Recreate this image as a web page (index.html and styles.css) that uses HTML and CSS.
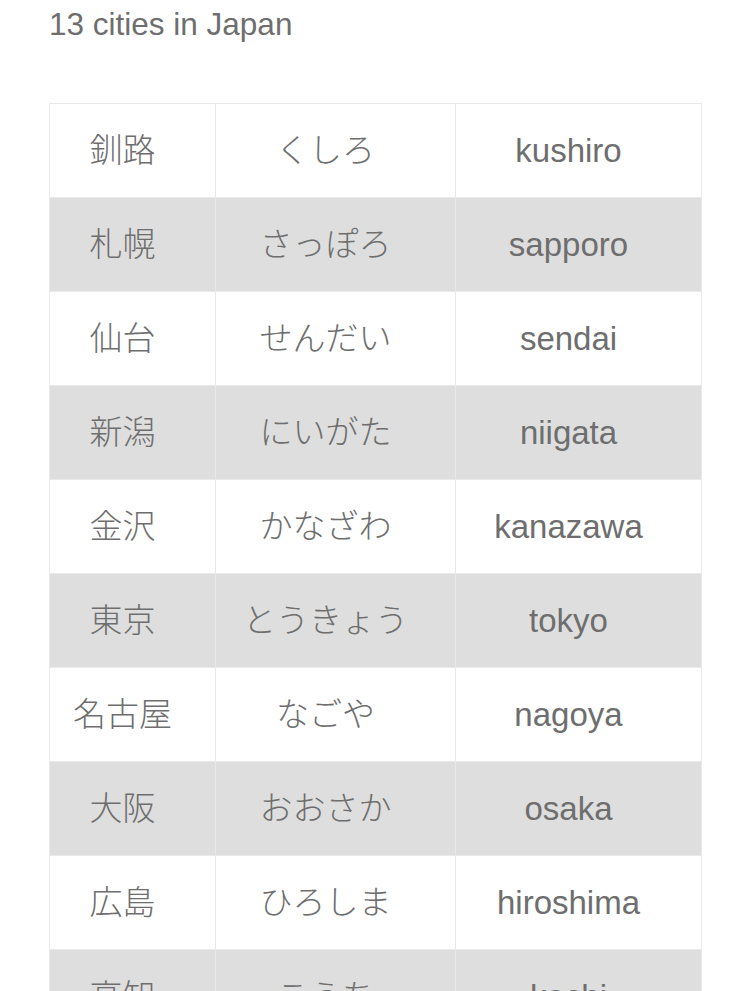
FILE: index.html
```html
<!DOCTYPE html>
<html lang="ja">
<head>
<meta charset="utf-8">
<title>13 cities in Japan</title>
<link rel="stylesheet" href="styles.css">
</head>
<body>
<main class="page">
  <h1 class="title">13 cities in Japan</h1>
  <table class="cities">
    <colgroup>
      <col class="col-kanji">
      <col class="col-kana">
      <col class="col-romaji">
    </colgroup>
    <tbody>
      <tr><td>釧路</td><td>くしろ</td><td>kushiro</td></tr>
      <tr><td>札幌</td><td>さっぽろ</td><td>sapporo</td></tr>
      <tr><td>仙台</td><td>せんだい</td><td>sendai</td></tr>
      <tr><td>新潟</td><td>にいがた</td><td>niigata</td></tr>
      <tr><td>金沢</td><td>かなざわ</td><td>kanazawa</td></tr>
      <tr><td>東京</td><td>とうきょう</td><td>tokyo</td></tr>
      <tr><td>名古屋</td><td>なごや</td><td>nagoya</td></tr>
      <tr><td>大阪</td><td>おおさか</td><td>osaka</td></tr>
      <tr><td>広島</td><td>ひろしま</td><td>hiroshima</td></tr>
      <tr><td>高知</td><td>こうち</td><td>kochi</td></tr>
      <tr><td>福岡</td><td>ふくおか</td><td>fukuoka</td></tr>
      <tr><td>鹿児島</td><td>かごしま</td><td>kagoshima</td></tr>
      <tr><td>那覇</td><td>なは</td><td>naha</td></tr>
    </tbody>
  </table>
</main>
</body>
</html>
```

FILE: styles.css
```css
html, body {
  margin: 0;
  padding: 0;
  background: #ffffff;
}

body {
  font-family: "Liberation Sans", "Noto Sans CJK JP", Arial, sans-serif;
  color: #6e6e6e;
}

.page {
  padding: 6px 43px 40px 49px;
}

.title {
  margin: 0 0 61px 0;
  font-size: 31.5px;
  font-weight: normal;
  line-height: 36px;
  color: #6e6e6e;
}

.cities {
  border-collapse: collapse;
  width: 652px;
  table-layout: fixed;
}

.col-kanji { width: 166px; }
.col-kana { width: 240px; }
.col-romaji { width: 246px; }

.cities td {
  border: 1px solid #e9e9e9;
  height: 93px;
  padding: 0 20px 0 0;
  text-align: center;
  vertical-align: middle;
  font-size: 33px;
  font-weight: 300;
  line-height: 40px;
  color: #6e6e6e;
  white-space: nowrap;
}

.cities tr:nth-child(even) td {
  background: #dedede;
}
```
